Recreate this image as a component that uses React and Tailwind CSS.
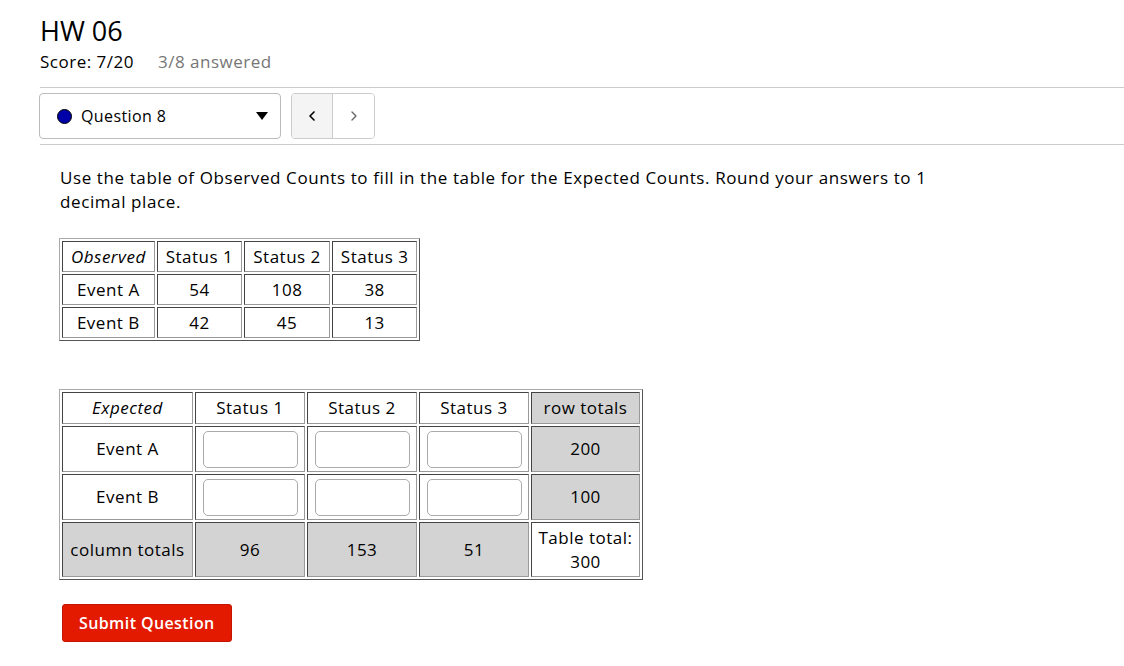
import { ChevronLeft, ChevronRight } from "lucide-react";

const observed = [
    ["Event A", 54, 108, 38],
    ["Event B", 42, 45, 13],
];

const cell = "border border-t-[#444] border-l-[#444] border-r-[#999] border-b-[#999]";

function InputBox() {
    return (
        <input
            type="text"
            className="w-[95px] h-[37px] rounded-[5px] border border-[#aaa] bg-white"
        />
    );
}

export default function App() {
    return (
        <div
            className="min-h-[666px] bg-white text-black pl-10 text-[17px] tracking-[0.5px]"
            style={{ fontFamily: '"Open Sans", "Liberation Sans", sans-serif' }}
        >
            {/* HEADER */}
            <div className="pt-[13px]">
                <h1 className="text-[27px] leading-[36px] tracking-normal">HW 06</h1>
                <div className="flex gap-[24px] leading-[24px] mt-[1px]">
                    <span>Score: 7/20</span>
                    <span className="text-[#767676]">3/8 answered</span>
                </div>
            </div>

            {/* QUESTION NAV */}
            <div className="mt-[13px] border-t border-b border-[#ccc] py-[5px] flex items-center gap-[10px]">
                <div className="w-[242px] h-[46px] border border-[#bbb] rounded-[4px] flex items-center pl-[17px] pr-[12px] -ml-[1px]">
                    <span className="w-[15px] h-[15px] rounded-full bg-[#0000a8] border border-black mr-[9px]" />
                    <span className="text-[16px] tracking-[0.4px]">Question 8</span>
                    <span className="ml-auto w-0 h-0 border-l-[6px] border-r-[6px] border-t-[8px] border-l-transparent border-r-transparent border-t-black" />
                </div>
                <div className="flex h-[46px] border border-[#ccc] rounded-[4px] overflow-hidden">
                    <button className="w-[41px] bg-[#f4f4f4] border-r border-[#ccc] flex items-center justify-center">
                        <ChevronLeft size={16} strokeWidth={2.5} className="text-black" />
                    </button>
                    <button className="w-[41px] bg-white flex items-center justify-center">
                        <ChevronRight size={16} strokeWidth={2} className="text-[#666]" />
                    </button>
                </div>
            </div>

            {/* QUESTION BODY */}
            <div className="pl-5 pt-[21px] max-w-[920px]">
                <p className="leading-[24px] tracking-[0.6px]">
                    Use the table of Observed Counts to fill in the table for the Expected Counts. Round your answers to 1 decimal place.
                </p>

                <table className="mt-[24px] border-separate border-spacing-[2px] border border-t-[#aaa] border-l-[#aaa] border-r-[#555] border-b-[#555] -ml-[1px]">
                    <tbody>
                        <tr className="h-[31px]">
                            <td className={`${cell} px-[8px] italic`}>Observed</td>
                            <td className={`${cell} px-[8px]`}>Status 1</td>
                            <td className={`${cell} px-[8px]`}>Status 2</td>
                            <td className={`${cell} px-[8px]`}>Status 3</td>
                        </tr>
                        {observed.map((row) => (
                            <tr key={row[0]} className="h-[31px]">
                                {row.map((v, i) => (
                                    <td key={i} className={`${cell} text-center`}>{v}</td>
                                ))}
                            </tr>
                        ))}
                    </tbody>
                </table>

                <table className="mt-[48px] border-separate border-spacing-[2px] border border-t-[#aaa] border-l-[#aaa] border-r-[#555] border-b-[#555] text-center -ml-[1px]">
                    <tbody>
                        <tr className="h-[32px]">
                            <td className={`${cell} w-[131px] italic`}>Expected</td>
                            <td className={`${cell} w-[110px]`}>Status 1</td>
                            <td className={`${cell} w-[110px]`}>Status 2</td>
                            <td className={`${cell} w-[110px]`}>Status 3</td>
                            <td className={`${cell} w-[109px] bg-[#d3d3d3]`}>row totals</td>
                        </tr>
                        {[["Event A", 200], ["Event B", 100]].map(([label, total]) => (
                            <tr key={label} className="h-[46px]">
                                <td className={cell}>{label}</td>
                                <td className={cell}><div className="flex justify-center"><InputBox /></div></td>
                                <td className={cell}><div className="flex justify-center"><InputBox /></div></td>
                                <td className={cell}><div className="flex justify-center"><InputBox /></div></td>
                                <td className={`${cell} bg-[#d3d3d3]`}>{total}</td>
                            </tr>
                        ))}
                        <tr className="h-[55px]">
                            <td className={`${cell} bg-[#d3d3d3]`}>column totals</td>
                            <td className={`${cell} bg-[#d3d3d3]`}>96</td>
                            <td className={`${cell} bg-[#d3d3d3]`}>153</td>
                            <td className={`${cell} bg-[#d3d3d3]`}>51</td>
                            <td className={`${cell} leading-[24px]`}>Table total:<br />300</td>
                        </tr>
                    </tbody>
                </table>

                <button className="mt-[24px] ml-[2px] h-[38px] px-[16px] bg-[#e31a00] text-white text-[16px] tracking-[0.4px] font-semibold rounded-[3px] border border-[#c21600]">
                    Submit Question
                </button>
            </div>
        </div>
    );
}
